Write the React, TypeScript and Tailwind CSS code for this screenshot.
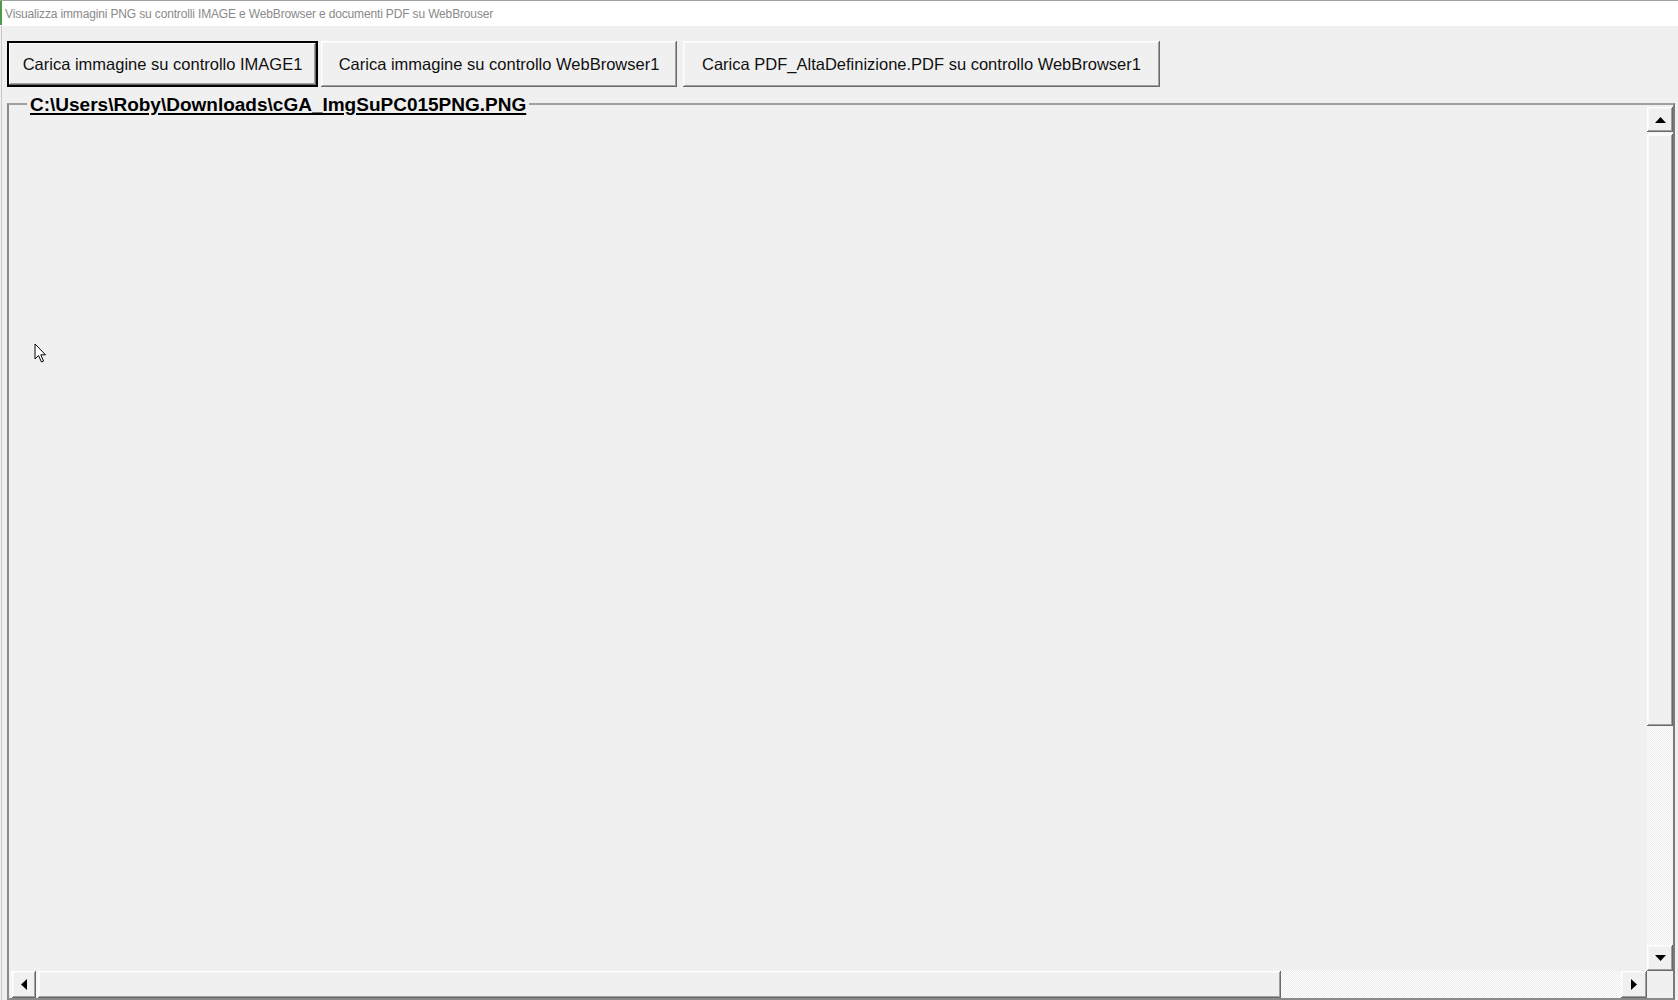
import type { ReactNode } from 'react';

// ─── Win32-style bevels ───────────────────────────────────────────────────────

const RAISED =
  'shadow-[inset_-1px_-1px_#696969,inset_1px_1px_#ffffff,inset_-2px_-2px_#a0a0a0,inset_2px_2px_#f8f8f8]';

const DITHER =
  'bg-[repeating-conic-gradient(#ffffff_0%_25%,#ececec_0%_50%)] bg-[length:2px_2px]';

function CmdButton({ label, width, isDefault }: { label: string; width: string; isDefault?: boolean }) {
  if (isDefault) {
    return (
      <div className={`h-[46px] ${width} border-2 border-black bg-[#f0f0f0]`}>
        <div className="flex h-full w-full items-center justify-center shadow-[inset_-1px_-1px_#696969,inset_1px_1px_#ffffff,inset_-2px_-2px_#a0a0a0]">
          <span className="text-[16.5px] text-[#101010]">{label}</span>
        </div>
      </div>
    );
  }
  return (
    <div className={`flex h-[46px] ${width} items-center justify-center bg-[#f0f0f0] ${RAISED}`}>
      <span className="text-[16.5px] text-[#101010]">{label}</span>
    </div>
  );
}

function ArrowBtn({ className, children }: { className: string; children: ReactNode }) {
  return (
    <div className={`flex shrink-0 items-center justify-center bg-[#f0f0f0] ${RAISED} ${className}`}>
      {children}
    </div>
  );
}

const Up = () => (
  <svg width="11" height="6" viewBox="0 0 11 6"><path d="M5.5 0 L11 6 L0 6 Z" fill="#000" /></svg>
);
const Down = () => (
  <svg width="11" height="6" viewBox="0 0 11 6"><path d="M0 0 L11 0 L5.5 6 Z" fill="#000" /></svg>
);
const Left = () => (
  <svg width="6" height="11" viewBox="0 0 6 11"><path d="M6 0 L6 11 L0 5.5 Z" fill="#000" /></svg>
);
const Right = () => (
  <svg width="6" height="11" viewBox="0 0 6 11"><path d="M0 0 L6 5.5 L0 11 Z" fill="#000" /></svg>
);

// ─── Page ─────────────────────────────────────────────────────────────────────

export default function App() {
  return (
    <div className="relative flex h-[1000px] w-[1678px] flex-col overflow-hidden bg-[#f0f0f0] font-['Liberation_Sans',Arial,sans-serif]">
      {/* caption strip */}
      <div className="flex h-[26px] shrink-0 items-center border-t border-[#a0a0a0] bg-white pl-[5px]">
        <span className="text-[12px] tracking-[-0.15px] text-[#8a8a8a]">
          Visualizza immagini PNG su controlli IMAGE e WebBrowser e documenti PDF su WebBrouser
        </span>
      </div>

      {/* faint sheet gridline at the left edge */}
      <div className="absolute left-0 top-[1px] h-[24px] w-[2px] bg-[#4c9a4c]" />
      <div className="absolute left-[1px] top-[26px] h-[974px] w-[1px] bg-[#c8c8c8]" />

      {/* command buttons */}
      <div className="flex shrink-0 pl-[7px] pt-[15px]">
        <CmdButton label="Carica immagine su controllo IMAGE1" width="w-[311px]" isDefault />
        <div className="w-[3px]" />
        <CmdButton label="Carica immagine su controllo WebBrowser1" width="w-[356px]" />
        <div className="w-[6px]" />
        <CmdButton label="Carica PDF_AltaDefinizione.PDF su controllo WebBrowser1" width="w-[477px]" />
      </div>

      {/* frame */}
      <div className="relative ml-[7px] mt-[16px] h-[897px] w-[1668px] border-2 border-l-[#8a8a8a] border-t-[#a0a0a0] border-r-[#7a7a7a] border-b-[#8a8a8a]">
        <span className="absolute left-[18px] top-[-11px] bg-[#f0f0f0] px-[3px] text-[19px] font-bold leading-[22px] text-black underline decoration-[2px] underline-offset-[2px]">
          C:\Users\Roby\Downloads\cGA_ImgSuPC015PNG.PNG
        </span>

        <div className="flex h-full flex-col pl-[1px] pt-[2px]">
          <div className="flex min-h-0 flex-1">
            {/* picture area */}
            <div className="relative flex-1">
              <svg className="absolute left-[24px] top-[236px]" width="14" height="21" viewBox="0 0 14 21">
                <path
                  d="M1 1 L1 16 L4.5 12.5 L7.5 19 L9.5 18 L6.8 11.8 L11.5 11.8 Z"
                  fill="#fff"
                  stroke="#000"
                  strokeWidth="1"
                  strokeLinejoin="miter"
                />
              </svg>
            </div>

            {/* vertical scrollbar */}
            <div className={`flex w-[26px] flex-col ${DITHER}`}>
              <ArrowBtn className="h-[25px] w-full"><Up /></ArrowBtn>
              <div className="h-[2px]" />
              <div className={`h-[592px] w-full bg-[#f0f0f0] ${RAISED}`} />
              <div className="flex-1" />
              <ArrowBtn className="h-[26px] w-full"><Down /></ArrowBtn>
            </div>
          </div>

          {/* horizontal scrollbar + corner */}
          <div className="flex h-[27px] shrink-0">
            <div className={`flex flex-1 ${DITHER}`}>
              <ArrowBtn className="ml-[2px] h-full w-[24px]"><Left /></ArrowBtn>
              <div className="w-[2px]" />
              <div className={`h-full w-[1243px] bg-[#f0f0f0] ${RAISED}`} />
              <div className="flex-1" />
              <ArrowBtn className="h-full w-[26px]"><Right /></ArrowBtn>
            </div>
            <div className="w-[26px] bg-[#f0f0f0]" />
          </div>
        </div>
      </div>
    </div>
  );
}
